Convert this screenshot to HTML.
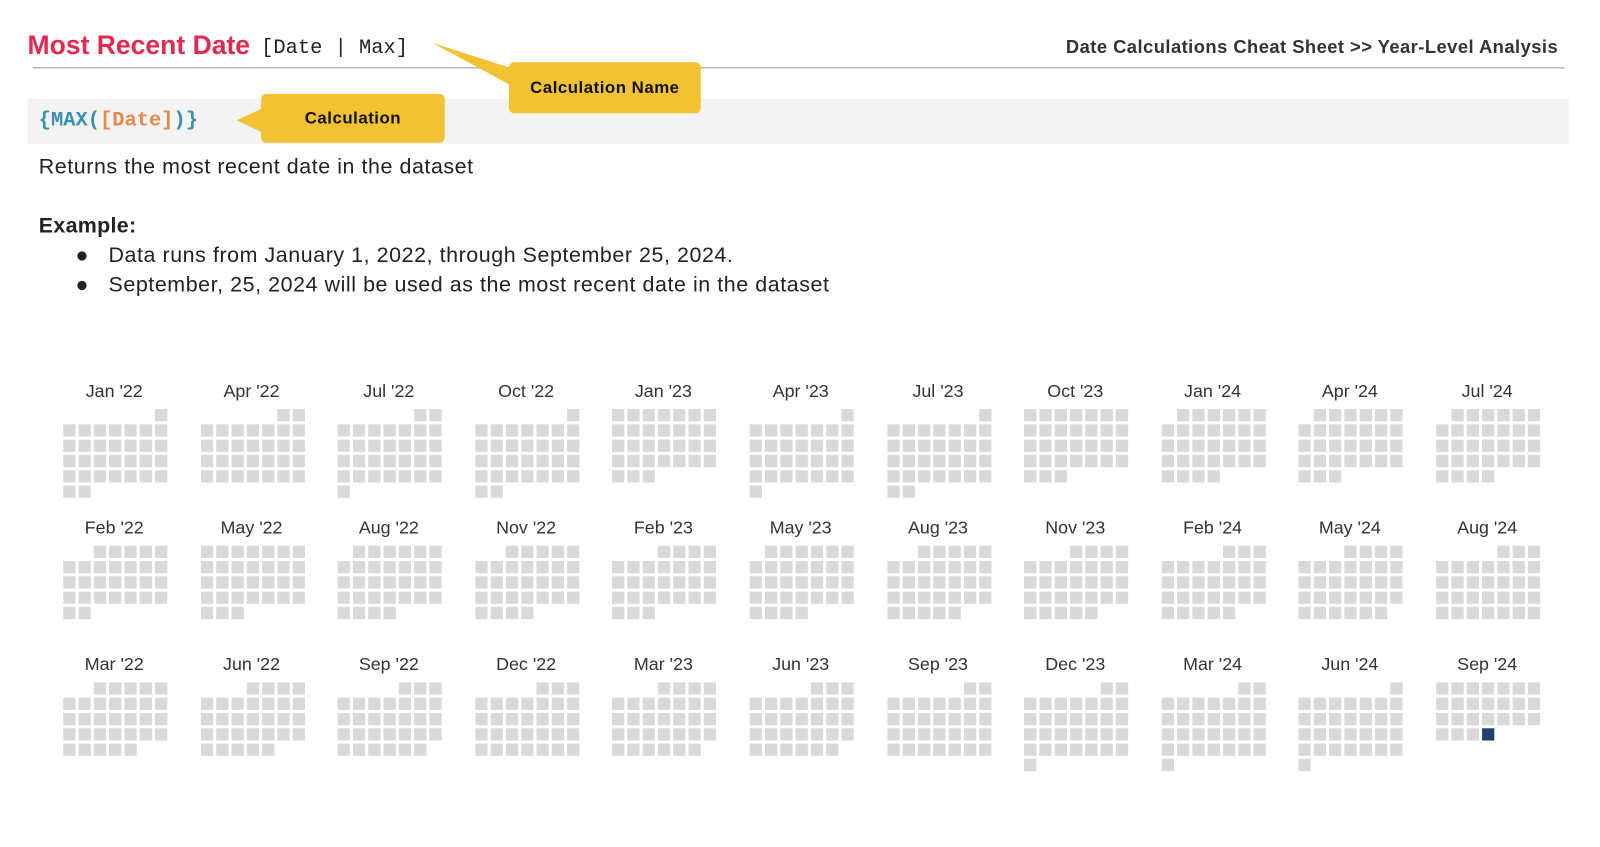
<!DOCTYPE html>
<html><head><meta charset="utf-8"><style>
body{margin:0;width:1600px;height:840px;background:#fff;overflow:hidden;font-family:"Liberation Sans",sans-serif}
#w{position:absolute;left:0;top:0;width:1570px;height:830px;transform:scale(1.02);transform-origin:0 0}
.a{position:absolute;white-space:nowrap}
.cell{position:absolute;width:12px;height:12px;background:#d9d9d9}
.lbl{position:absolute;width:120px;text-align:center;font-size:17.5px;color:#333}
.call{position:absolute;background:#f1c232;border-radius:5px;font-weight:bold;font-size:16.5px;letter-spacing:0.5px;text-align:center;color:#111}
.t{font-size:21px;letter-spacing:0.55px;color:#222}
</style></head><body><div id="w">
<div class="a" style="left:27px;top:29px;font-size:26px;font-weight:bold;color:#e2294f">Most Recent Date</div>
<div class="a" style="left:256px;top:36px;font-family:'Liberation Mono',monospace;font-size:20px;color:#222">[Date | Max]</div>
<div class="a" style="left:1045px;top:36px;font-size:18px;letter-spacing:0.45px;font-weight:bold;color:#333">Date Calculations Cheat Sheet &gt;&gt; Year-Level Analysis</div>
<div class="a" style="left:32px;top:66px;width:1502px;height:1px;background:#999"></div>
<div class="a" style="left:27px;top:97px;width:1511px;height:44px;background:#f3f3f3"></div>
<div class="a" style="left:38px;top:107px;font-family:'Liberation Mono',monospace;font-size:20px;font-weight:bold"><span style="color:#3a8fb0">{MAX(</span><span style="color:#e8894a">[Date]</span><span style="color:#3a8fb0">)}</span></div>
<svg class="a" style="left:0;top:0" width="1600" height="200">
<polygon points="424,42 505,68 505,86" fill="#f1c232"/>
<polygon points="232,118 262,104 262,132" fill="#f1c232"/>
</svg>
<div class="call" style="left:499px;top:61px;width:188px;height:50px;line-height:50px">Calculation Name</div>
<div class="call" style="left:256px;top:92px;width:180px;height:48px;line-height:48px">Calculation</div>
<div class="a t" style="left:38px;top:152px">Returns the most recent date in the dataset</div>
<div class="a t" style="left:38px;top:210px;font-weight:bold;letter-spacing:0.3px">Example:</div>
<div class="a t" style="left:74px;top:239px">●&nbsp;&nbsp;&nbsp;Data runs from January 1, 2022, through September 25, 2024.</div>
<div class="a t" style="left:74px;top:268px">●&nbsp;&nbsp;&nbsp;September, 25, 2024 will be used as the most recent date in the dataset</div>
<div id="cal"></div>
</div>
<script>
var names=["Jan","Feb","Mar","Apr","May","Jun","Jul","Aug","Sep","Oct","Nov","Dec"];
var h="";
for(var i=0;i<33;i++){
 var col=Math.floor(i/3),row=i%3;
 var y=2022+Math.floor(i/12),m=i%12;
 var x0=62+col*134.6,y0=401+row*134;
 h+='<div class="lbl" style="left:'+(x0-10)+'px;top:'+(y0-28)+'px">'+names[m]+" '"+String(y).slice(2)+'</div>';
 var fd=new Date(y,m,1).getDay(),nd=new Date(y,m+1,0).getDate();
 if(y==2024&&m==8)nd=25;
 for(var d=1;d<=nd;d++){
  var k=fd+d-1,c=k%7,r=Math.floor(k/7);
  var bg=(y==2024&&m==8&&d==25)?'background:#1f3f6e;':'';
  h+='<div class="cell" style="'+bg+'left:'+Math.round(x0+c*15)+'px;top:'+(y0+r*15)+'px"></div>';
 }
}
document.getElementById("cal").innerHTML=h;
</script>
</body></html>
